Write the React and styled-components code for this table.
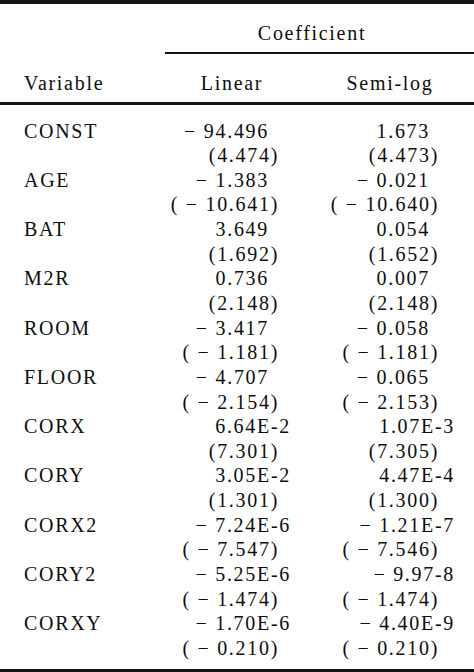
import React from "react";
import styled, { createGlobalStyle } from "styled-components";

const GlobalStyle = createGlobalStyle`
  html, body {
    margin: 0;
    padding: 0;
    background: #ffffff;
  }
`;

const Table = styled.div`
  width: 474px;
  height: 672px;
  box-sizing: border-box;
  border-top: 4px solid #151515;
  border-bottom: 3px solid #151515;
  font-family: "Liberation Serif", "DejaVu Serif", serif;
  color: #0d0d0d;
  font-size: 20px;
  line-height: 24.5px;
  letter-spacing: 1.7px;
`;

const Grid = styled.div`
  display: grid;
  grid-template-columns: 165px 134px 1fr;
`;

const CoefRow = styled(Grid)`
  padding-top: 17px;
`;

const CoefCell = styled.div`
  grid-column: 2 / 4;
  text-align: center;
  padding-right: 15px;
  padding-bottom: 6.5px;
  border-bottom: 2.5px solid #151515;
`;

const HeadRow = styled(Grid)`
  padding-top: 16.5px;
  padding-bottom: 6.5px;
  border-bottom: 3px solid #151515;
`;

const HeadCell = styled.div`
  text-align: ${(p) => (p.$left ? "left" : "center")};
  padding-left: ${(p) => p.$pl || 0}px;
`;

const Body = styled.div`
  padding-top: 14px;
`;

const Line = styled(Grid)`
  height: 24.65px;
  line-height: 24.65px;
`;

const VarName = styled.div`
  padding-left: 24px;
  white-space: nowrap;
`;

const pads = {
  lin: { num: 30, paren: 20, exp: 8 },
  semi: { num: 44, paren: 35, exp: 19 },
};

const Value = styled.div`
  text-align: right;
  white-space: pre;
  padding-right: ${(p) => pads[p.$col][p.$kind]}px;
`;

const rows = [
  ["CONST", "− 94.496", "1.673", "(4.474)", "(4.473)"],
  ["AGE", "− 1.383", "− 0.021", "( − 10.641)", "( − 10.640)"],
  ["BAT", "3.649", "0.054", "(1.692)", "(1.652)"],
  ["M2R", "0.736", "0.007", "(2.148)", "(2.148)"],
  ["ROOM", "− 3.417", "− 0.058", "( − 1.181)", "( − 1.181)"],
  ["FLOOR", "− 4.707", "− 0.065", "( − 2.154)", "( − 2.153)"],
  ["CORX", "6.64E-2", "1.07E-3", "(7.301)", "(7.305)"],
  ["CORY", "3.05E-2", "4.47E-4", "(1.301)", "(1.300)"],
  ["CORX2", "− 7.24E-6", "− 1.21E-7", "( − 7.547)", "( − 7.546)"],
  ["CORY2", "− 5.25E-6", "− 9.97-8", "( − 1.474)", "( − 1.474)"],
  ["CORXY", "− 1.70E-6", "− 4.40E-9", "( − 0.210)", "( − 0.210)"],
];

// values written with an exponent hang further right than plain ones
const kindOf = (v) => (/E-|\d-\d/.test(v) ? "exp" : "num");

function App() {
  return (
    <>
      <GlobalStyle />
      <Table>
        <CoefRow>
          <CoefCell>Coefficient</CoefCell>
        </CoefRow>
        <HeadRow>
          <HeadCell $left $pl={24}>Variable</HeadCell>
          <HeadCell>Linear</HeadCell>
          <HeadCell $pl={7}>Semi-log</HeadCell>
        </HeadRow>
        <Body>
          {rows.map(([name, lin, semi, linT, semiT]) => (
            <React.Fragment key={name}>
              <Line>
                <VarName>{name}</VarName>
                <Value $col="lin" $kind={kindOf(lin)}>{lin}</Value>
                <Value $col="semi" $kind={kindOf(semi)}>{semi}</Value>
              </Line>
              <Line>
                <div />
                <Value $col="lin" $kind="paren">{linT}</Value>
                <Value $col="semi" $kind="paren">{semiT}</Value>
              </Line>
            </React.Fragment>
          ))}
        </Body>
      </Table>
    </>
  );
}

export default App;
